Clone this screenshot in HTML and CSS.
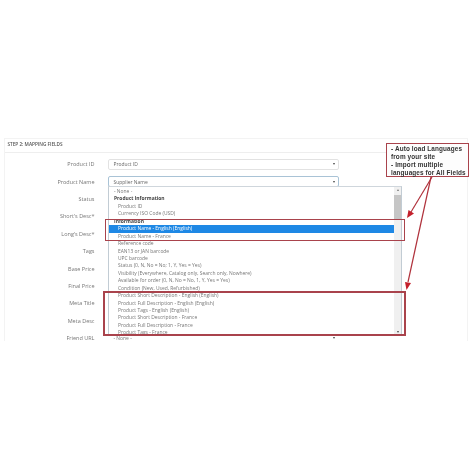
FILE: index.html
```html
<!DOCTYPE html>
<html lang="en">
<head>
<meta charset="utf-8">
<title>Step 2: Mapping fields</title>
<link rel="stylesheet" href="styles.css">
</head>
<body>
<main class="stage">
  <section class="panel">
    <h2 class="panel-title">STEP 2: MAPPING FIELDS</h2>
    <div class="rows">
      <div class="row"><label class="lbl">Product ID</label><div class="select"><span>Product ID</span><i class="caret"></i></div></div>
      <div class="row"><label class="lbl">Product Name</label><div class="select open"><span>Supplier Name</span><i class="caret"></i></div></div>
      <div class="row"><label class="lbl">Status</label></div>
      <div class="row"><label class="lbl">Short's Desc*</label></div>
      <div class="row"><label class="lbl">Long's Desc*</label></div>
      <div class="row"><label class="lbl">Tags</label></div>
      <div class="row"><label class="lbl">Base Price</label></div>
      <div class="row"><label class="lbl">Final Price</label></div>
      <div class="row"><label class="lbl">Meta Title</label></div>
      <div class="row"><label class="lbl">Meta Desc</label></div>
      <div class="row"><label class="lbl">Friend URL</label><div class="select bare"><span>- None -</span><i class="caret"></i></div></div>
    </div>
    <div class="dropdown">
      <ul class="list">
        <li>- None -</li>
        <li class="group">Product Information</li>
        <li class="sub">Product ID</li>
        <li class="sub">Currency ISO Code (USD)</li>
        <li class="group">Information</li>
        <li class="sub sel">Product Name - English (English)</li>
        <li class="sub">Product Name - France</li>
        <li class="sub">Reference code</li>
        <li class="sub">EAN13 or JAN barcode</li>
        <li class="sub">UPC barcode</li>
        <li class="sub">Status (0, N, No = No; 1, Y, Yes = Yes)</li>
        <li class="sub">Visibility (Everywhere, Catalog only, Search only, Nowhere)</li>
        <li class="sub">Available for order (0, N, No = No, 1, Y, Yes = Yes)</li>
        <li class="sub">Condition (New, Used, Refurbished)</li>
        <li class="sub">Product Short Description - English (English)</li>
        <li class="sub">Product Full Description - English (English)</li>
        <li class="sub">Product Tags - English (English)</li>
        <li class="sub">Product Short Description - France</li>
        <li class="sub">Product Full Description - France</li>
        <li class="sub">Product Tags - France</li>
      </ul>
      <div class="scrollbar"><i class="up"></i><b class="thumb"></b><i class="down"></i></div>
    </div>
  </section>
  <svg class="arrows" width="474" height="474" viewBox="0 0 474 474" aria-hidden="true">
    <path d="M432 177 L411 212" class="shaft"/>
    <path d="M407 218 L408.500 210 L414 213.500 Z" class="head"/>
    <path d="M431 177 L408 282" class="shaft"/>
    <path d="M406.500 290 L405 282 L411 283 Z" class="head"/>
  </svg>
  <div class="box box-a"></div>
  <div class="box box-b"></div>
  <div class="callout">- Auto load Languages<br>from your site<br>- Import multiple<br>languages for All Fields</div>
</main>
</body>
</html>
```

FILE: styles.css
```css
* { box-sizing: border-box; }
html, body { margin: 0; padding: 0; background: #fff; }
body { width: 474px; height: 474px; overflow: hidden; font-family: "Open Sans", "Liberation Sans", sans-serif; }
.stage { position: relative; width: 474px; height: 474px; padding: 138px 6px 0 4px; }
.panel { position: relative; height: 203px; border: 1px solid #f3f3f3; border-bottom: 0; filter: blur(0.4px); }
.panel-title { margin: 0; height: 14px; padding-left: 2.500px; font-size: 4.700px; line-height: 11px; font-weight: 600; color: #555; border-bottom: 1px solid #eee; }
.rows { padding-top: 2.500px; }
.row { display: flex; align-items: center; height: 17.4px; }
.lbl { width: 89.5px; text-align: right; font-size: 5.500px; color: #777; flex: none; }
.select { display: flex; align-items: center; justify-content: space-between; width: 231px; height: 11px; margin-left: 13.500px; padding: 0 3px 0 4.500px; font-size: 4.950px; color: #666; border: 1px solid #e2e2e2; border-radius: 2px; background: #fff; }
.select.open { border-color: #a9c3d6; }
.select.bare { border-color: transparent; background: none; color: #777; }
.caret { width: 0; height: 0; border: 1.500px solid transparent; border-top: 2px solid #444; border-bottom: 0; }
.dropdown { position: absolute; left: 103px; top: 47px; width: 294px; height: 150px; display: flex; background: #fff; border: 1px solid #c2ccd4; border-top-color: #cfd6dc; }
.list { flex: 1; list-style: none; margin: 0; padding: 1px 0 0; font-size: 4.950px; line-height: 7.44px; color: #777; }
.list li { height: 7.44px; padding-left: 5px; white-space: nowrap; }
.list .group { font-weight: 700; color: #444; padding-left: 5px; }
.list .sub { padding-left: 9px; }
.list .sel { background: #1e88e5; color: #fff; }
.scrollbar { display: flex; flex-direction: column; width: 7px; background: #f0f0f0; }
.thumb { display: block; height: 24px; margin-top: 2px; background: #c6c6c6; }
.up, .down { display: block; width: 0; height: 0; margin: 2px auto; border: 1.500px solid transparent; }
.up { border-top: 0; border-bottom: 2px solid #777; }
.down { margin-top: auto; border-bottom: 0; border-top: 2px solid #444; }
.arrows { position: absolute; left: 0; top: 0; pointer-events: none; filter: blur(0.25px); }
.shaft { fill: none; stroke: #b0323c; stroke-width: 1.200; }
.head { fill: #c4202c; }
.box { position: absolute; border: 1.500px solid #a9434c; filter: blur(0.25px); }
.box-a { left: 105px; top: 219px; width: 300px; height: 22px; }
.box-b { left: 103px; top: 291px; width: 303px; height: 45px; border-width: 2px; }
.callout { position: absolute; left: 386px; top: 143px; width: 83px; height: 34px; padding: 1.200px 0 0 4px; background: #fdfdfd; border: 1.500px solid #a9434c; font-family: "Liberation Sans", sans-serif; font-size: 6.400px; font-weight: 700; line-height: 7.800px; letter-spacing: 0.12px; color: #333; white-space: nowrap; filter: blur(0.3px); }
```
